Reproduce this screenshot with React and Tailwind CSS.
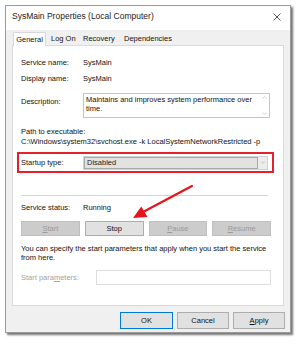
export default function App() {
  const btn = 'flex items-center justify-center h-[15px] border text-[7.5px]'
  const off = 'bg-[#cccccc] border-[#bfbfbf] text-[#9a9a9a]'
  const on = 'bg-[#e1e1e1] border-[#adadad] text-[#111]'

  return (
    <div className="relative w-[300px] h-[344px] bg-white pt-[5px] pl-[5px] overflow-hidden font-['Liberation_Sans',Arial,sans-serif] text-[#111]">
      {/* Dialog window */}
      <div className="w-[286px] h-[328px] flex flex-col border border-[#9a9a9a] bg-[#f0f0f0] shadow-[2px_2px_2px_rgba(0,0,0,0.55)]">
        {/* Title bar */}
        <div className="h-[24px] bg-white flex items-center justify-between pl-[6px] pr-[9px] pb-[3px]">
          <span className="text-[8.5px] text-[#222]">SysMain Properties (Local Computer)</span>
          <svg width="8" height="8" viewBox="0 0 8 8" className="text-[#444]">
            <path d="M0.5 0.5L7.5 7.5M7.5 0.5L0.5 7.5" stroke="currentColor" strokeWidth="0.9" />
          </svg>
        </div>

        <div className="flex flex-col px-[6px]">
          {/* Tabs */}
          <div className="h-[15px] flex items-end text-[7.5px]">
            <div className="relative z-10 -mb-px ml-px h-[14px] w-[33px] bg-white border border-b-0 border-[#d9d9d9] flex items-center justify-center">
              General
            </div>
            <div className="h-[12px] flex items-center pl-[5px] w-[37px]">Log On</div>
            <div className="h-[12px] flex items-center w-[41px]">Recovery</div>
            <div className="h-[12px] flex items-center">Dependencies</div>
          </div>

          {/* Panel */}
          <div className="h-[261px] bg-white border border-[#d9d9d9] pl-[8px] pr-[12px] flex flex-col text-[7.5px]">
            <div className="mt-[9px] h-[16px] flex items-center">
              <span className="w-[62px]">Service name:</span>
              <span>SysMain</span>
            </div>
            <div className="h-[16px] flex items-center">
              <span className="w-[62px]">Display name:</span>
              <span>SysMain</span>
            </div>
            <div className="mt-[6px] flex">
              <span className="w-[62px] pt-[4px] leading-[10px]">Description:</span>
              <div className="w-[187px] h-[25px] border border-[#c4c4c4] flex">
                <div className="flex-1 pl-[2px] pt-[1px] leading-[9px]">
                  Maintains and improves system performance over
                  <br />
                  time.
                </div>
                <div className="w-[9px] flex flex-col justify-between items-center py-[2px] text-[#c2c2c2]">
                  <svg width="5" height="3" viewBox="0 0 5 3"><path d="M0.5 2.5L2.5 0.5L4.5 2.5" stroke="currentColor" strokeWidth="0.8" fill="none" /></svg>
                  <svg width="5" height="3" viewBox="0 0 5 3"><path d="M0.5 0.5L2.5 2.5L4.5 0.5" stroke="currentColor" strokeWidth="0.8" fill="none" /></svg>
                </div>
              </div>
            </div>
            <div className="mt-[9px] h-[10px] flex items-center">Path to executable:</div>
            <div className="h-[10px] flex items-center whitespace-nowrap">
              C:\Windows\system32\svchost.exe -k LocalSystemNetworkRestricted -p
            </div>

            {/* Startup type, highlighted */}
            <div className="mt-[5px] -ml-[4px] w-[257px] h-[21px] border-2 border-[#e3202b] flex items-center pl-[2px]">
              <span className="w-[62px]">Startup type:</span>
              <div className="w-[185px] h-[14px] flex border border-[#d2d2d2] bg-[#ececec]">
                <div className="w-[174px] border border-[#a9a9a9] bg-[#e2e2e2] flex items-center pl-[2px] text-[#222]">
                  Disabled
                </div>
                <div className="flex-1 flex items-center justify-center text-[#b5b5b5]">
                  <svg width="4" height="3" viewBox="0 0 4 3"><path d="M0.3 0.5L2 2.3L3.7 0.5" stroke="currentColor" strokeWidth="0.7" fill="none" /></svg>
                </div>
              </div>
            </div>

            <div className="mt-[22px] h-px w-[247px] bg-[#d5d5d5]" />

            <div className="mt-[7px] h-[10px] flex items-center">
              <span className="w-[62px]">Service status:</span>
              <span>Running</span>
            </div>

            <div className="mt-[8px] grid grid-cols-4 gap-[5px] w-[250px]">
              <div className={`${btn} ${off}`}><span><u>S</u>tart</span></div>
              <div className={`${btn} ${on}`}>Stop</div>
              <div className={`${btn} ${off}`}><span><u>P</u>ause</span></div>
              <div className={`${btn} ${off}`}><span><u>R</u>esume</span></div>
            </div>

            <div className="mt-[8px] leading-[9px]">
              You can specify the start parameters that apply when you start the service from here.
            </div>

            <div className="mt-[8px] flex items-center">
              <span className="w-[75px] text-[#a3a3a3]">Start para<u>m</u>eters:</span>
              <div className="w-[175px] h-[15px] border border-[#dedede] bg-white" />
            </div>
          </div>

          {/* Dialog buttons */}
          <div className="mt-[6px] flex justify-end gap-[4px] -mr-[1px] text-[7.5px]">
            <div className="w-[53px] h-[17px] flex items-center justify-center bg-[#e1e1e1] border border-[#0078d7]">OK</div>
            <div className="w-[52px] h-[17px] flex items-center justify-center bg-[#e1e1e1] border border-[#adadad]">Cancel</div>
            <div className="w-[52px] h-[17px] flex items-center justify-center bg-[#e1e1e1] border border-[#adadad]"><span><u>A</u>pply</span></div>
          </div>
        </div>
      </div>

      {/* Red annotation arrow */}
      <svg className="absolute left-0 top-0 pointer-events-none" width="300" height="344" viewBox="0 0 300 344">
        <line x1="192" y1="186" x2="143" y2="212" stroke="#e8141c" strokeWidth="2.2" strokeLinecap="round" />
        <polygon points="133,218 147.5,217 141.3,206.5" fill="#e8141c" />
      </svg>
    </div>
  )
}
